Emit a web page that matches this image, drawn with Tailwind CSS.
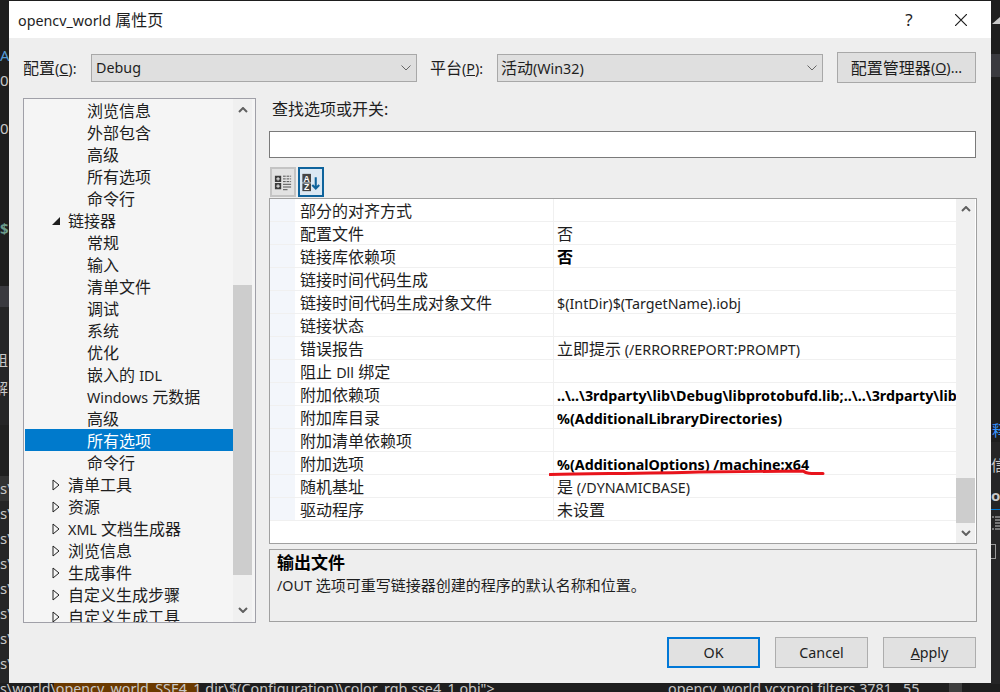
<!DOCTYPE html>
<html lang="zh-CN">
<head>
    <meta charset="UTF-8">
    <title>opencv_world 属性页</title>
    <script src="https://cdn.jsdelivr.net/npm/@tailwindcss/browser@4"></script>
</head>
<body class="bg-[#1e1e1e] overflow-hidden font-['Noto_Sans','Noto_Sans_CJK_SC',sans-serif]">
<div class="relative w-[1000px] h-[692px] overflow-hidden text-[#1e1e1e] text-[14.3px]">

    <!-- editor behind the dialog -->
    <div class="absolute left-0 top-[286px] w-[9px] h-[21px] bg-[#3a3a3f]"></div>
    <div class="absolute left-0 top-[307px] w-[9px] h-[118px] bg-[#252526]"></div>
    <div class="absolute left-0 top-[425px] w-[9px] h-[51px] bg-[#202020]"></div>
    <div class="absolute left-0 top-[476px] w-[9px] h-[25px] bg-[#333333]"></div>
    <div class="absolute left-0 top-[501px] w-[9px] h-[182px] bg-[#252526]"></div>
    <span class="absolute left-0 top-[45px] text-[#569cd6] leading-[20px] text-[15px]">A</span>
    <span class="absolute left-0 top-[70px] text-[#c8c8c8] leading-[20px] text-[15px]">0</span>
    <span class="absolute left-0 top-[118px] text-[#c8c8c8] leading-[20px] text-[15px]">0</span>
    <span class="absolute left-0 top-[218px] text-[#6a9a8a] font-bold leading-[20px] text-[15px]">$</span>
    <span class="absolute left-[-7px] top-[350px] text-[#c8c8c8] leading-[20px] text-[15px]">组</span>
    <span class="absolute left-[-7px] top-[378px] text-[#c8c8c8] leading-[20px] text-[15px]">解</span>
    <div class="absolute left-0 top-[476px] flex flex-col text-[#c8c8c8] leading-[25px] text-[15px]">
        <span>s\</span><span>s\</span><span>s\</span><span>s\</span><span>s\</span><span>s\</span><span>s\</span><span>s\</span>
    </div>
    <div class="absolute left-[991px] top-[54px] w-[9px] h-[23px] bg-[#3a3a3f]"></div>
    <div class="absolute left-[991px] top-[442px] w-[9px] h-[242px] bg-[#252526]"></div>
    <div class="absolute left-[991px] top-[509px] w-[9px] h-[1px] bg-[#0078d4]"></div>
    <svg class="absolute left-[992px] top-[17px]" width="8" height="7"><path d="M8 0V7H0Z" fill="#c8c8c8"/></svg>
    <span class="absolute left-[992px] top-[420px] text-[#3794ff] leading-[20px] text-[15px]">释</span>
    <span class="absolute left-[991px] top-[455px] text-[#c8c8c8] leading-[20px] text-[15px]">信</span>
    <span class="absolute left-[991px] top-[485px] text-[#c8c8c8] font-bold leading-[20px] text-[15px]">op</span>
    <svg class="absolute left-[991px] top-[515px]" width="9" height="18" viewBox="0 0 9 18"><path d="M1 2H3M1 14H3M4 2H9M4 5H9M4 8H9M4 11H9M4 14H9" stroke="#c8c8c8"/></svg>
    <div class="absolute left-[991px] top-[544px] w-[5px] h-[15px] border border-l-0 border-[#999999]"></div>
    <div class="absolute left-0 top-[679px] w-full h-[13px] text-[#c8c8c8] leading-[20px] whitespace-nowrap">
        <div class="absolute left-[54px] top-[4px] w-[144px] h-[9px] bg-[#6b3a00]"></div>
        <span class="absolute left-0 top-0">s\world\opencv_world_SSE4_1.dir\$(Configuration)\color_rgb.sse4_1.obj"&gt;</span>
        <span class="absolute left-[668px] top-0">opencv_world.vcxproj.filters 3781&nbsp;&nbsp; 55</span>
        <div class="absolute left-[949px] top-[4px] w-[13px] h-[9px] bg-[#3e3e3e]"></div>
    </div>

    <!-- dialog -->
    <div class="absolute left-[9px] top-[1px] w-[982px] h-[682px] bg-[#eeeeee] flex flex-col">
        <div class="h-[37px] bg-white flex items-center pl-[9px] text-[16px]">
            <span class="flex-1"><span class="text-[14.3px]">opencv_world</span> 属性页</span>
            <span class="w-[24px] text-center text-[17px] mr-[34px]">?</span>
            <svg class="mr-[24px]" width="12" height="12" viewBox="0 0 12 12"><path d="M0 0L12 12M12 0L0 12" stroke="#1e1e1e" stroke-width="1.2" fill="none"/></svg>
        </div>

        <div class="mt-[14px] h-[31px] pl-[14px] flex items-center">
            <span class="w-[68px]"><span class="text-[16px]">配置</span>(<u>C</u>):</span>
            <div class="w-[326px] h-[28px] bg-[#dfdfdf] border border-[#a8a8a8] flex items-center justify-between pl-[4px] pr-[5px]">
                <span>Debug</span>
                <svg width="10" height="6" viewBox="0 0 10 6"><path d="M0.5 0.5L5 5L9.500 0.5" stroke="#666" fill="none"/></svg>
            </div>
            <span class="ml-[13px] w-[67px]"><span class="text-[16px]">平台</span>(<u>P</u>):</span>
            <div class="w-[326px] h-[28px] bg-[#dfdfdf] border border-[#a8a8a8] flex items-center justify-between pl-[3px] pr-[5px]">
                <span><span class="text-[16px]">活动</span>(Win32)</span>
                <svg width="10" height="6" viewBox="0 0 10 6"><path d="M0.5 0.5L5 5L9.500 0.5" stroke="#666" fill="none"/></svg>
            </div>
            <div class="ml-[14px] w-[139px] h-[31px] bg-[#dfdfdf] border border-[#a8a8a8] flex items-center justify-center"><span class="text-[16px]">配置管理器</span>(<u>O</u>)...</div>
        </div>

        <div class="mt-[15px] pl-[14px] flex gap-[13px]">
            <!-- tree -->
            <div class="relative w-[233px] h-[525px] bg-[#f5f5f5] border border-[#a0a0a8] overflow-hidden flex">
                <div class="w-[209px] pl-[1px] flex flex-col text-[16px] leading-[24px] whitespace-nowrap">
                    <div class="h-[22px] pl-[62px]">浏览信息</div>
                    <div class="h-[22px] pl-[62px]">外部包含</div>
                    <div class="h-[22px] pl-[62px]">高级</div>
                    <div class="h-[22px] pl-[62px]">所有选项</div>
                    <div class="h-[22px] pl-[62px]">命令行</div>
                    <div class="h-[22px] pl-[27px] pt-[2px] flex items-center gap-[8px]"><svg class="w-[8px] h-[8px]" viewBox="0 0 8 8"><path d="M8 0V8H0Z" fill="#1e1e1e"/></svg><span>链接器</span></div>
                    <div class="h-[22px] pl-[62px]">常规</div>
                    <div class="h-[22px] pl-[62px]">输入</div>
                    <div class="h-[22px] pl-[62px]">清单文件</div>
                    <div class="h-[22px] pl-[62px]">调试</div>
                    <div class="h-[22px] pl-[62px]">系统</div>
                    <div class="h-[22px] pl-[62px]">优化</div>
                    <div class="h-[22px] pl-[62px]">嵌入的 <span class="text-[14.3px]">IDL</span></div>
                    <div class="h-[22px] pl-[62px]"><span class="text-[14.3px]">Windows</span> 元数据</div>
                    <div class="h-[22px] pl-[62px]">高级</div>
                    <div class="h-[22px] pl-[62px] bg-[#007acc] text-white">所有选项</div>
                    <div class="h-[22px] pl-[62px]">命令行</div>
                    <div class="h-[22px] pl-[27px] pt-[2px] flex items-center gap-[8px]"><svg class="w-[8px] h-[12px]" viewBox="0 0 8 12"><path d="M1 1L7 6L1 11Z" fill="none" stroke="#1e1e1e"/></svg><span>清单工具</span></div>
                    <div class="h-[22px] pl-[27px] pt-[2px] flex items-center gap-[8px]"><svg class="w-[8px] h-[12px]" viewBox="0 0 8 12"><path d="M1 1L7 6L1 11Z" fill="none" stroke="#1e1e1e"/></svg><span>资源</span></div>
                    <div class="h-[22px] pl-[27px] pt-[2px] flex items-center gap-[8px]"><svg class="w-[8px] h-[12px]" viewBox="0 0 8 12"><path d="M1 1L7 6L1 11Z" fill="none" stroke="#1e1e1e"/></svg><span><span class="text-[14.3px]">XML</span> 文档生成器</span></div>
                    <div class="h-[22px] pl-[27px] pt-[2px] flex items-center gap-[8px]"><svg class="w-[8px] h-[12px]" viewBox="0 0 8 12"><path d="M1 1L7 6L1 11Z" fill="none" stroke="#1e1e1e"/></svg><span>浏览信息</span></div>
                    <div class="h-[22px] pl-[27px] pt-[2px] flex items-center gap-[8px]"><svg class="w-[8px] h-[12px]" viewBox="0 0 8 12"><path d="M1 1L7 6L1 11Z" fill="none" stroke="#1e1e1e"/></svg><span>生成事件</span></div>
                    <div class="h-[22px] pl-[27px] pt-[2px] flex items-center gap-[8px]"><svg class="w-[8px] h-[12px]" viewBox="0 0 8 12"><path d="M1 1L7 6L1 11Z" fill="none" stroke="#1e1e1e"/></svg><span>自定义生成步骤</span></div>
                    <div class="h-[22px] pl-[27px] pt-[2px] flex items-center gap-[8px]"><svg class="w-[8px] h-[12px]" viewBox="0 0 8 12"><path d="M1 1L7 6L1 11Z" fill="none" stroke="#1e1e1e"/></svg><span>自定义生成工具</span></div>
                </div>
                <div class="w-[19px] h-[523px] bg-[#f0f0f0] flex flex-col items-center shrink-0">
                    <div class="h-[22px] flex items-center justify-center"><svg width="10" height="6" viewBox="0 0 10 6"><path d="M1 5L5 1L9 5" stroke="#606060" stroke-width="2" fill="none"/></svg></div>
                    <div class="h-[164px]"></div>
                    <div class="w-full h-[290px] bg-[#cdcdcd]"></div>
                    <div class="h-[47px] w-full flex items-end justify-center pb-[9px]"><svg width="10" height="6" viewBox="0 0 10 6"><path d="M1 1L5 5L9 1" stroke="#606060" stroke-width="2" fill="none"/></svg></div>
                </div>
            </div>

            <!-- properties -->
            <div class="w-[708px] flex flex-col">
                <div class="h-[22px] pl-[3px] leading-[22px] text-[16px]">查找选项或开关:</div>
                <div class="mt-[11px] w-[707px] h-[27px] bg-white border border-[#7a7a7a]"></div>
                <div class="mt-[9px] h-[30px] pl-[1px] flex gap-[2px]">
                    <div class="w-[26px] h-[30px] bg-[#e2e2e2] border-2 border-[#c4c4c4] flex items-center justify-center">
                        <svg width="18" height="19" viewBox="0 0 20 19">
                            <path d="M1 2H8V9H1ZM1 10H8V17H1Z" fill="#3c3c3c"/>
                            <path d="M2.500 5.500H6.500M4.500 3.500V7.500M2.500 13.500H6.500M4.500 11.500V15.500" stroke="#fff"/>
                            <path d="M10 2.500H19M10 5.500H19M10 8.500H19" stroke="#444" stroke-dasharray="3 1"/>
                            <path d="M10 11.500H19M10 14.500H19M10 17.500H15" stroke="#444"/>
                        </svg>
                    </div>
                    <div class="w-[26px] h-[30px] bg-[#dbe8f3] border-2 border-[#0e639c] flex items-center justify-center">
                        <svg width="18" height="19" viewBox="0 0 20 22">
                            <rect x="0" y="1" width="10" height="10" fill="#444"/>
                            <rect x="0" y="12" width="10" height="9" fill="#444"/>
                            <text x="5" y="10" text-anchor="middle" font-size="10" font-weight="700" font-family="Liberation Sans" fill="#fff">A</text>
                            <text x="5" y="20" text-anchor="middle" font-size="10" font-weight="700" font-family="Liberation Sans" fill="#fff">Z</text>
                            <path d="M15.500 5V18M11.500 14L15.500 18L19.500 14" stroke="#0e639c" stroke-width="2.400" fill="none"/>
                        </svg>
                    </div>
                </div>
                <div class="mt-[1px] h-[346px] bg-white border border-[#a0a0a0] flex">
                    <div class="flex-1 min-w-0 flex flex-col overflow-hidden">
                        <div class="h-[23px] flex border-b border-[#f0f0f0]"><div class="w-[25px] bg-[#f3f6fb] shrink-0"></div><div class="w-[258px] pl-[5px] leading-[25px] text-[16px] shrink-0">部分的对齐方式</div><div class="flex-1 border-l border-[#f0f0f0] pl-[3px] leading-[25px] whitespace-nowrap overflow-hidden"></div></div>
                        <div class="h-[23px] flex border-b border-[#f0f0f0]"><div class="w-[25px] bg-[#f3f6fb] shrink-0"></div><div class="w-[258px] pl-[5px] leading-[25px] text-[16px] shrink-0">配置文件</div><div class="flex-1 border-l border-[#f0f0f0] pl-[3px] leading-[25px] whitespace-nowrap overflow-hidden text-[16px]">否</div></div>
                        <div class="h-[23px] flex border-b border-[#f0f0f0]"><div class="w-[25px] bg-[#f3f6fb] shrink-0"></div><div class="w-[258px] pl-[5px] leading-[25px] text-[16px] shrink-0">链接库依赖项</div><div class="flex-1 border-l border-[#f0f0f0] pl-[3px] leading-[25px] whitespace-nowrap overflow-hidden font-bold text-black text-[16px]">否</div></div>
                        <div class="h-[23px] flex border-b border-[#f0f0f0]"><div class="w-[25px] bg-[#f3f6fb] shrink-0"></div><div class="w-[258px] pl-[5px] leading-[25px] text-[16px] shrink-0">链接时间代码生成</div><div class="flex-1 border-l border-[#f0f0f0] pl-[3px] leading-[25px] whitespace-nowrap overflow-hidden"></div></div>
                        <div class="h-[23px] flex border-b border-[#f0f0f0]"><div class="w-[25px] bg-[#f3f6fb] shrink-0"></div><div class="w-[258px] pl-[5px] leading-[25px] text-[16px] shrink-0">链接时间代码生成对象文件</div><div class="flex-1 border-l border-[#f0f0f0] pl-[3px] leading-[25px] whitespace-nowrap overflow-hidden">$(IntDir)$(TargetName).iobj</div></div>
                        <div class="h-[23px] flex border-b border-[#f0f0f0]"><div class="w-[25px] bg-[#f3f6fb] shrink-0"></div><div class="w-[258px] pl-[5px] leading-[25px] text-[16px] shrink-0">链接状态</div><div class="flex-1 border-l border-[#f0f0f0] pl-[3px] leading-[25px] whitespace-nowrap overflow-hidden"></div></div>
                        <div class="h-[23px] flex border-b border-[#f0f0f0]"><div class="w-[25px] bg-[#f3f6fb] shrink-0"></div><div class="w-[258px] pl-[5px] leading-[25px] text-[16px] shrink-0">错误报告</div><div class="flex-1 border-l border-[#f0f0f0] pl-[3px] leading-[25px] whitespace-nowrap overflow-hidden"><span class="text-[16px]">立即提示</span> (/ERRORREPORT:PROMPT)</div></div>
                        <div class="h-[23px] flex border-b border-[#f0f0f0]"><div class="w-[25px] bg-[#f3f6fb] shrink-0"></div><div class="w-[258px] pl-[5px] leading-[25px] text-[16px] shrink-0">阻止 <span class="text-[14.3px]">Dll</span> 绑定</div><div class="flex-1 border-l border-[#f0f0f0] pl-[3px] leading-[25px] whitespace-nowrap overflow-hidden"></div></div>
                        <div class="h-[23px] flex border-b border-[#f0f0f0]"><div class="w-[25px] bg-[#f3f6fb] shrink-0"></div><div class="w-[258px] pl-[5px] leading-[25px] text-[16px] shrink-0">附加依赖项</div><div class="flex-1 border-l border-[#f0f0f0] pl-[3px] leading-[25px] whitespace-nowrap overflow-hidden font-bold text-black">..\..\3rdparty\lib\Debug\libprotobufd.lib;..\..\3rdparty\lib</div></div>
                        <div class="h-[23px] flex border-b border-[#f0f0f0]"><div class="w-[25px] bg-[#f3f6fb] shrink-0"></div><div class="w-[258px] pl-[5px] leading-[25px] text-[16px] shrink-0">附加库目录</div><div class="flex-1 border-l border-[#f0f0f0] pl-[3px] leading-[25px] whitespace-nowrap overflow-hidden font-bold text-black">%(AdditionalLibraryDirectories)</div></div>
                        <div class="h-[23px] flex border-b border-[#f0f0f0]"><div class="w-[25px] bg-[#f3f6fb] shrink-0"></div><div class="w-[258px] pl-[5px] leading-[25px] text-[16px] shrink-0">附加清单依赖项</div><div class="flex-1 border-l border-[#f0f0f0] pl-[3px] leading-[25px] whitespace-nowrap overflow-hidden"></div></div>
                        <div class="h-[23px] flex border-b border-[#f0f0f0]"><div class="w-[25px] bg-[#f3f6fb] shrink-0"></div><div class="w-[258px] pl-[5px] leading-[25px] text-[16px] shrink-0">附加选项</div><div class="flex-1 border-l border-[#f0f0f0] pl-[3px] leading-[25px] whitespace-nowrap overflow-hidden font-bold text-black">%(AdditionalOptions) /machine:x64</div></div>
                        <div class="h-[23px] flex border-b border-[#f0f0f0]"><div class="w-[25px] bg-[#f3f6fb] shrink-0"></div><div class="w-[258px] pl-[5px] leading-[25px] text-[16px] shrink-0">随机基址</div><div class="flex-1 border-l border-[#f0f0f0] pl-[3px] leading-[25px] whitespace-nowrap overflow-hidden"><span class="text-[16px]">是</span> (/DYNAMICBASE)</div></div>
                        <div class="h-[23px] flex border-b border-[#f0f0f0]"><div class="w-[25px] bg-[#f3f6fb] shrink-0"></div><div class="w-[258px] pl-[5px] leading-[25px] text-[16px] shrink-0">驱动程序</div><div class="flex-1 border-l border-[#f0f0f0] pl-[3px] leading-[25px] whitespace-nowrap overflow-hidden text-[16px]">未设置</div></div>
                    </div>
                    <div class="w-[19px] mr-px bg-[#f0f0f0] flex flex-col shrink-0">
                        <div class="h-[20px] flex items-center justify-center"><svg width="10" height="6" viewBox="0 0 10 6"><path d="M1 5L5 1L9 5" stroke="#606060" stroke-width="2" fill="none"/></svg></div>
                        <div class="h-[259px]"></div>
                        <div class="h-[45px] bg-[#cdcdcd]"></div>
                        <div class="h-[20px] flex items-center justify-center"><svg width="10" height="6" viewBox="0 0 10 6"><path d="M1 1L5 5L9 1" stroke="#606060" stroke-width="2" fill="none"/></svg></div>
                    </div>
                </div>
                <div class="mt-[5px] h-[73px] border border-[#a0a0a0] pl-[7px] pt-[2px]">
                    <div class="font-bold text-[17px] leading-[22px] text-black">输出文件</div>
                    <div class="leading-[23px] text-[15px]"><span class="text-[14.3px]">/OUT</span> 选项可重写链接器创建的程序的默认名称和位置。</div>
                </div>
            </div>
        </div>

        <div class="mt-[14px] pr-[15px] flex justify-end gap-[15px]">
            <div class="w-[93px] h-[31px] bg-[#e1e1e1] border-2 border-[#0078d7] flex items-center justify-center">OK</div>
            <div class="w-[93px] h-[31px] bg-[#e1e1e1] border border-[#adadad] flex items-center justify-center">Cancel</div>
            <div class="w-[93px] h-[31px] bg-[#e1e1e1] border border-[#adadad] flex items-center justify-center"><span><u>A</u>pply</span></div>
        </div>

        <!-- hand-drawn red mark over the value -->
        <svg class="absolute left-[540px] top-[466px]" width="280" height="12" viewBox="0 0 280 12">
            <path d="M1 7.500C50 6.500 100 6.500 150 5C190 4.500 230 4 254 4C258 7 262 6.500 274 6.500" stroke="#e8141c" stroke-width="3" stroke-linecap="round" fill="none"/>
        </svg>
    </div>
</div>
</body>
</html>
